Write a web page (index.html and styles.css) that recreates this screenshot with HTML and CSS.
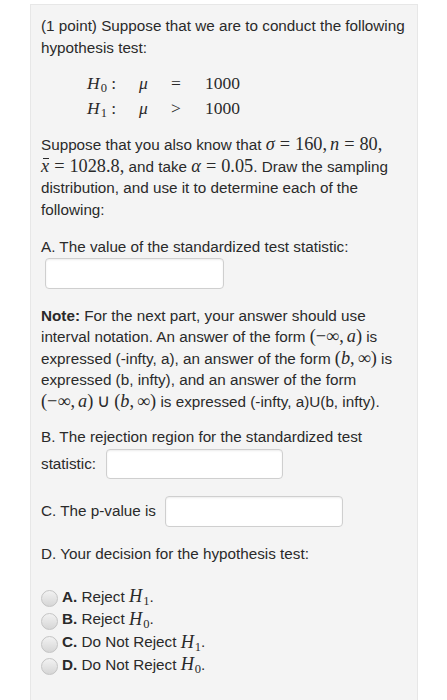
FILE: index.html
```html
<!DOCTYPE html>
<html>
<head>
<meta charset="utf-8">
<link rel="stylesheet" href="styles.css">
</head>
<body>
<div class="panel">
  <p class="p1"><span class="nw">(1 point) Suppose that we are to conduct the following</span> hypothesis test:</p>
  <div class="hyp">
    <span class="m"><i>H</i><sub>0</sub> :</span><span class="m"><i>μ</i></span><span class="m">=</span><span class="m">1000</span>
    <span class="m"><i>H</i><sub>1</sub> :</span><span class="m"><i>μ</i></span><span class="m">&gt;</span><span class="m">1000</span>
  </div>
  <p class="p2">Suppose that you also know that <span class="m mi"><i>σ</i><span class="rel">=</span>160,<span class="th"></span><i>n</i><span class="rel">=</span>80,</span> <span class="m mi"><i class="xbar">x</i><span class="rel">=</span>1028.8,</span> and take <span class="m mi"><i>α</i><span class="rel">=</span>0.05</span>. Draw the sampling distribution, and use it to determine each of the following:</p>
  <p class="qa">A. The value of the standardized test statistic:</p>
  <div class="input in-a"></div>
  <p class="note"><b>Note:</b> For the next part, your answer should use interval notation. An answer of the form <span class="m mi">(−∞,<span class="th"></span><i>a</i>)</span> is expressed (-infty, a), an answer of the form <span class="m mi">(<i>b</i>,<span class="th"></span>∞)</span> is expressed (b, infty), and an answer of the form <span class="m mi">(−∞,<span class="th"></span><i>a</i>)<span class="bin">∪</span>(<i>b</i>,<span class="th"></span>∞)</span> is expressed (-infty, a)U(b, infty).</p>
  <p class="qb">B. The rejection region for the standardized test</p>
  <div class="row row-b"><span>statistic:</span><div class="input in-b"></div></div>
  <div class="row row-c"><span>C. The p-value is</span><div class="input in-c"></div></div>
  <p class="qd">D. Your decision for the hypothesis test:</p>
  <ul class="opts">
    <li><span class="radio"></span><b>A.</b> Reject <span class="m mi"><i>H</i><sub>1</sub></span>.</li>
    <li><span class="radio"></span><b>B.</b> Reject <span class="m mi"><i>H</i><sub>0</sub></span>.</li>
    <li><span class="radio"></span><b>C.</b> Do Not Reject <span class="m mi"><i>H</i><sub>1</sub></span>.</li>
    <li><span class="radio"></span><b>D.</b> Do Not Reject <span class="m mi"><i>H</i><sub>0</sub></span>.</li>
  </ul>
</div>
</body>
</html>
```

FILE: styles.css
```css
html, body {
  margin: 0;
  padding: 0;
  background: #ffffff;
}
body {
  font-family: "Liberation Sans", Arial, sans-serif;
  font-size: 15.25px;
  line-height: 21.5px;
  color: #2a2a2a;
}
.panel {
  margin: 4px 0 0 30px;
  width: 366px;
  min-height: 720px;
  padding: 10px 10px 0 10px;
  background: #f4f4f4;
  border: 1px solid #e7e7e7;
  border-bottom: none;
}
p { margin: 0; }
.nw { white-space: nowrap; }
.m {
  font-family: "Liberation Serif", "Times New Roman", serif;
  font-size: 17.5px;
  line-height: 1;
  white-space: nowrap;
}
.mi { font-size: 18.3px; }
.m i { font-style: italic; }
.m sub {
  font-size: 12.5px;
  vertical-align: -3px;
  line-height: 0;
  margin-left: 1px;
}
.rel { margin: 0 5px; }
.bin { margin: 0 4px; }
.th { display: inline-block; width: 3px; }
.xbar { position: relative; }
.xbar::before {
  content: "";
  position: absolute;
  left: 2px;
  right: 0;
  top: 2px;
  border-top: 1px solid currentColor;
}
.hyp {
  display: grid;
  grid-template-columns: 52px 32px 34px auto;
  grid-auto-rows: 25px;
  align-items: center;
  margin: 13px 0 0 46px;
}
.p2 { margin-top: 13px; }
.qa { margin-top: 16px; }
.input {
  box-sizing: border-box;
  background: #ffffff;
  border: 1px solid #cfcfcf;
  border-radius: 4px;
  box-shadow: inset 0 1px 2px rgba(0,0,0,0.08);
}
.in-a {
  width: 179px;
  height: 31px;
  margin-left: 4px;
}
.note { margin-top: 16px; }
.qb { margin-top: 14px; }
.row {
  display: flex;
  align-items: center;
}
.row-b { margin-top: 1px; gap: 10px; }
.in-b { width: 177px; height: 30px; }
.row-c { margin-top: 17px; gap: 9px; }
.in-c { width: 178px; height: 31px; }
.qd { margin-top: 16px; }
.opts {
  list-style: none;
  margin: 21px 0 0 0;
  padding: 0;
}
.opts li {
  display: flex;
  align-items: center;
  height: 22.7px;
  white-space: pre;
}
.opts b { font-weight: bold; }
.radio {
  box-sizing: border-box;
  width: 17px;
  height: 17px;
  border-radius: 50%;
  border: 1px solid #c4c4c4;
  background: linear-gradient(#f2f2f2, #d6d6d6);
  margin: 5px 4px 0 0;
  flex: none;
}
```
